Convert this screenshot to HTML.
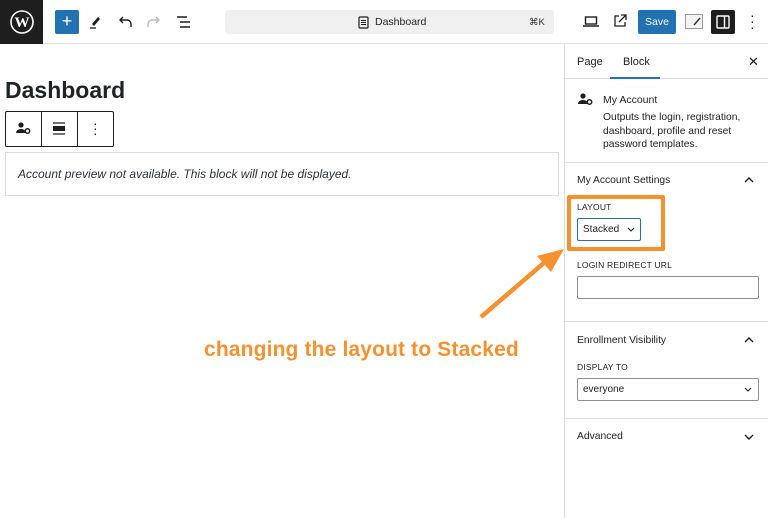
<!DOCTYPE html>
<html><head><meta charset="utf-8"><style>
*{box-sizing:border-box;margin:0;padding:0}
body{width:768px;height:518px;overflow:hidden;background:#fff;font-family:"Liberation Sans",sans-serif;color:#1e1e1e;position:relative}
.a{position:absolute}
.t{font-size:11px}
.lbl{font-size:8.5px;font-weight:500;color:#1e1e1e;letter-spacing:.2px}
.sel{border:1px solid #8c8f94;border-radius:2px;background:#fff}
</style></head><body>
<div class="a" style="left:0;top:0;width:768px;height:44px;border-bottom:1px solid #e0e0e0"></div>
<div class="a" style="left:0;top:0;width:43px;height:44px;background:#1e1e1e"></div>
<svg class="a" style="left:10px;top:10px" width="24" height="24" viewBox="0 0 24 24"><circle cx="12" cy="12" r="11" fill="none" stroke="#fff" stroke-width="1.6"/><text x="12" y="17" fill="#fff" font-size="15" font-weight="bold" text-anchor="middle" font-family="Liberation Serif">W</text></svg>
<div class="a" style="left:55px;top:10px;width:24px;height:24px;background:#2271b1;border-radius:2px;color:#fff;font-size:18px;text-align:center;line-height:23px">+</div>
<svg class="a" style="left:88px;top:14px" width="16" height="16" viewBox="0 0 16 16"><path d="M4 10 L10 3 L12 5 L6 12 Z" fill="#1e1e1e"/><path d="M2 14h6" stroke="#1e1e1e" stroke-width="1.3"/></svg>
<svg class="a" style="left:117px;top:15px" width="16" height="14" viewBox="0 0 16 14"><path d="M14 12 V9 a4 4 0 0 0-4-4 H3 M6 2 L3 5 L6 8" fill="none" stroke="#1e1e1e" stroke-width="1.4"/></svg>
<svg class="a" style="left:146px;top:15px" width="16" height="14" viewBox="0 0 16 14"><path d="M2 12 V9 a4 4 0 0 1 4-4 H13 M10 2 L13 5 L10 8" fill="none" stroke="#bbb" stroke-width="1.4"/></svg>
<svg class="a" style="left:176px;top:15px" width="16" height="14" viewBox="0 0 16 14"><path d="M1 2h10M4 7h10M4 12h10" stroke="#1e1e1e" stroke-width="1.4"/></svg>
<div class="a" style="left:225px;top:10px;width:329px;height:24px;background:#f0f0f0;border-radius:3px"></div>
<svg class="a" style="left:358px;top:16px" width="11" height="13" viewBox="0 0 11 13"><rect x="1" y="1" width="9" height="11" rx="1" fill="none" stroke="#1e1e1e" stroke-width="1.2"/><path d="M3 4.5h5M3 6.5h5M3 8.5h5" stroke="#1e1e1e"/></svg>
<div class="a t" style="left:375px;top:16px;font-size:10.5px">Dashboard</div>
<div class="a" style="left:529px;top:17px;font-size:9.5px;color:#333">⌘K</div>
<svg class="a" style="left:583px;top:15px" width="16" height="13" viewBox="0 0 16 13"><rect x="2.5" y="2" width="11" height="7" fill="none" stroke="#1e1e1e" stroke-width="1.4"/><path d="M0 11h16" stroke="#1e1e1e" stroke-width="1.5"/></svg>
<svg class="a" style="left:613px;top:14px" width="14" height="14" viewBox="0 0 14 14"><path d="M6 2H2v10h10V8M8 1h5v5M13 1L6 8" fill="none" stroke="#1e1e1e" stroke-width="1.3"/></svg>
<div class="a" style="left:638px;top:10px;width:38px;height:24px;background:#2271b1;border-radius:2px;color:#fff;font-size:10.5px;text-align:center;line-height:24px">Save</div>
<svg class="a" style="left:685px;top:14px" width="18" height="15" viewBox="0 0 18 15"><rect x=".5" y=".5" width="17" height="14" fill="#f4f4f4" stroke="#999"/><path d="M9 11 L15 4" stroke="#333" stroke-width="1.5"/></svg>
<div class="a" style="left:711px;top:10px;width:24px;height:24px;background:#1e1e1e;border-radius:2px"></div>
<svg class="a" style="left:716px;top:15px" width="14" height="14" viewBox="0 0 14 14"><rect x="1" y="1" width="12" height="12" rx="1" fill="none" stroke="#fff" stroke-width="1.4"/><path d="M8.5 1v12" stroke="#fff" stroke-width="1.4"/></svg>
<div class="a" style="left:750px;top:12px;font-size:14px;line-height:6px;width:4px;text-align:center">·<br>·<br>·</div>

<div class="a" style="left:5px;top:77px;font-size:23px;font-weight:bold;color:#1d2327">Dashboard</div>
<div class="a" style="left:5px;top:111px;width:109px;height:36px;border:1px solid #1e1e1e;border-radius:2px"></div>
<div class="a" style="left:41px;top:112px;width:1px;height:34px;background:#1e1e1e"></div>
<div class="a" style="left:77px;top:112px;width:1px;height:34px;background:#1e1e1e"></div>
<svg class="a" style="left:16px;top:122px" width="15" height="13" viewBox="0 0 15 13"><circle cx="5" cy="3" r="2.6" fill="#1e1e1e"/><path d="M0 11 a5 4 0 0 1 10 0 Z" fill="#1e1e1e"/><circle cx="11.5" cy="9" r="2.2" fill="none" stroke="#1e1e1e" stroke-width="1.5"/></svg>
<svg class="a" style="left:53px;top:122px" width="12" height="13" viewBox="0 0 12 13"><path d="M0 1h12M0 12h12" stroke="#1e1e1e" stroke-width="1.3"/><rect x="0" y="4" width="12" height="5" fill="#1e1e1e"/></svg>
<div class="a" style="left:93px;top:121px;font-size:14px;line-height:5px">·<br>·<br>·</div>
<div class="a" style="left:5px;top:152px;width:554px;height:44px;border:1px solid #ddd"></div>
<div class="a" style="left:18px;top:167px;font-size:12px;font-style:italic;color:#2c3338">Account preview not available. This block will not be displayed.</div>

<div class="a" style="left:204px;top:338px;font-size:21px;letter-spacing:.15px;font-weight:bold;color:#f7912f;white-space:nowrap">changing the layout to Stacked</div>
<svg class="a" style="left:470px;top:240px" width="100" height="85" viewBox="470 240 100 85"><path d="M481 317 L545 262" stroke="#f7912f" stroke-width="4.5"/><path d="M564 249 L537 256 L551 272 Z" fill="#f7912f"/></svg>

<div class="a" style="left:564px;top:44px;width:1px;height:474px;background:#e0e0e0"></div>
<div class="a" style="left:565px;top:78px;width:203px;height:1px;background:#e0e0e0"></div>
<div class="a t" style="left:577px;top:56px;font-weight:500">Page</div>
<div class="a t" style="left:623px;top:56px;font-weight:500">Block</div>
<div class="a" style="left:610px;top:77px;width:50px;height:2px;background:#2271b1"></div>
<div class="a" style="left:748px;top:54px;font-size:13px">✕</div>
<svg class="a" style="left:578px;top:93px" width="15" height="13" viewBox="0 0 15 13"><circle cx="5" cy="3" r="2.6" fill="#1e1e1e"/><path d="M0 11 a5 4 0 0 1 10 0 Z" fill="#1e1e1e"/><circle cx="11.5" cy="9" r="2.2" fill="none" stroke="#1e1e1e" stroke-width="1.5"/></svg>
<div class="a" style="left:603px;top:94px;font-size:10.5px;font-weight:500">My Account</div>
<div class="a" style="left:603px;top:111px;font-size:10.3px;line-height:13.5px;color:#1e1e1e">Outputs the login, registration,<br>dashboard, profile and reset<br>password templates.</div>
<div class="a" style="left:565px;top:162px;width:203px;height:1px;background:#e0e0e0"></div>
<div class="a" style="left:577px;top:175px;font-size:10.3px;font-weight:500">My Account Settings</div>
<svg class="a" style="left:744px;top:176px" width="10" height="7" viewBox="0 0 10 7"><path d="M1 6 L5 2 L9 6" fill="none" stroke="#1e1e1e" stroke-width="1.4"/></svg>
<div class="a lbl" style="left:577px;top:202px">LAYOUT</div>
<div class="a" style="left:577px;top:218px;width:64px;height:23px;border:1px solid #2271b1;border-radius:2px"></div>
<div class="a" style="left:583px;top:224px;font-size:10px">Stacked</div>
<svg class="a" style="left:627px;top:227px" width="8" height="5" viewBox="0 0 8 5"><path d="M1 1 L4 4 L7 1" fill="none" stroke="#1e1e1e" stroke-width="1.1"/></svg>
<div class="a" style="left:567px;top:195px;width:98px;height:56px;border:4px solid #f7912f;border-radius:2px"></div>
<div class="a lbl" style="left:577px;top:260px">LOGIN REDIRECT URL</div>
<div class="a sel" style="left:577px;top:276px;width:182px;height:23px"></div>
<div class="a" style="left:565px;top:321px;width:203px;height:1px;background:#e0e0e0"></div>
<div class="a" style="left:577px;top:335px;font-size:10.3px;font-weight:500">Enrollment Visibility</div>
<svg class="a" style="left:744px;top:336px" width="10" height="7" viewBox="0 0 10 7"><path d="M1 6 L5 2 L9 6" fill="none" stroke="#1e1e1e" stroke-width="1.4"/></svg>
<div class="a lbl" style="left:577px;top:362px">DISPLAY TO</div>
<div class="a sel" style="left:577px;top:378px;width:182px;height:23px"></div>
<div class="a" style="left:583px;top:384px;font-size:10px">everyone</div>
<svg class="a" style="left:744px;top:387px" width="8" height="5" viewBox="0 0 8 5"><path d="M1 1 L4 4 L7 1" fill="none" stroke="#1e1e1e" stroke-width="1.1"/></svg>
<div class="a" style="left:565px;top:418px;width:203px;height:1px;background:#e0e0e0"></div>
<div class="a" style="left:577px;top:431px;font-size:10.3px;font-weight:500">Advanced</div>
<svg class="a" style="left:744px;top:434px" width="10" height="7" viewBox="0 0 10 7"><path d="M1 1 L5 5 L9 1" fill="none" stroke="#1e1e1e" stroke-width="1.4"/></svg>
</body></html>
